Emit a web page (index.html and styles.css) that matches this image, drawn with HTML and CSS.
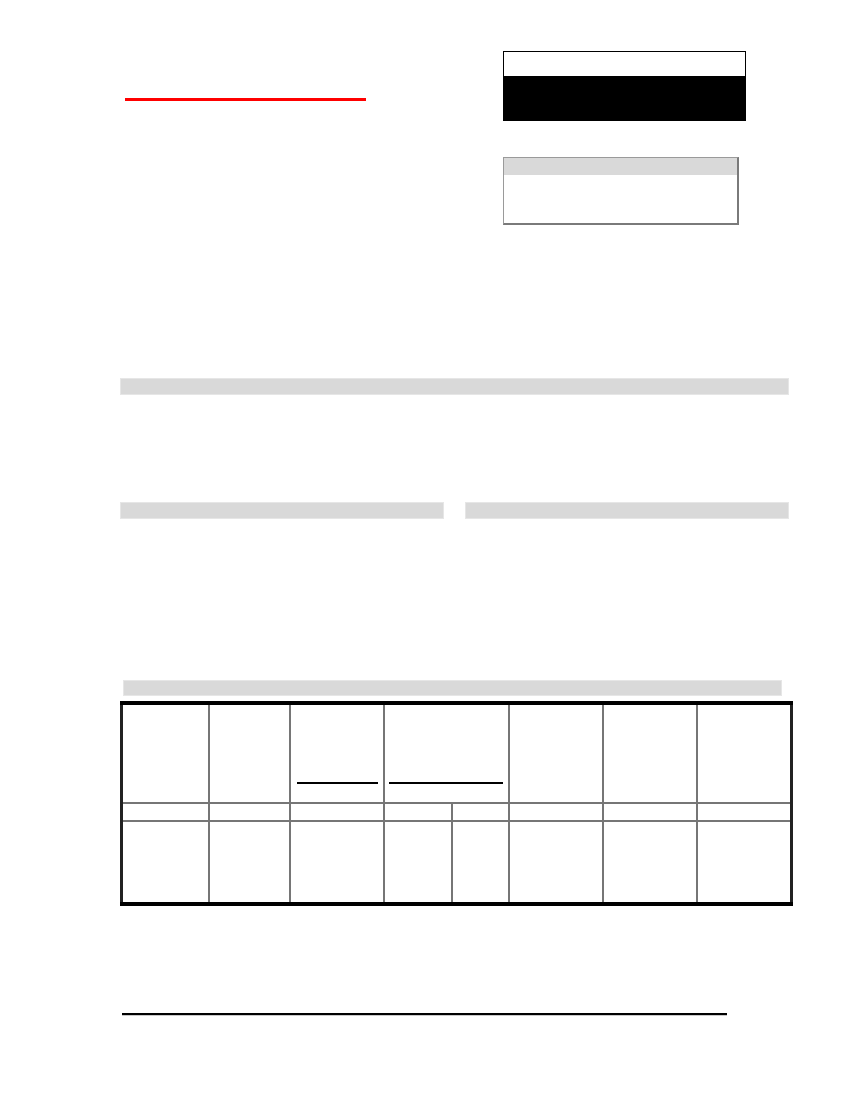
FILE: index.html
```html
<!DOCTYPE html>
<html>
<head>
<meta charset="utf-8">
<link rel="stylesheet" href="styles.css">
</head>
<body>
<div class="page">
  <div class="top">
    <div class="top-left">
      <div class="red-rule"></div>
    </div>
    <div class="top-right">
      <div class="idbox">
        <div class="idbox-top"></div>
        <div class="idbox-bottom"></div>
      </div>
      <div class="graybox">
        <div class="graybox-head"></div>
        <div class="graybox-body"></div>
      </div>
    </div>
  </div>

  <div class="bar bar-full"></div>

  <div class="bar-pair">
    <div class="bar"></div>
    <div class="bar"></div>
  </div>

  <div class="bar bar-table"></div>

  <table class="grid">
    <colgroup>
      <col class="w87"><col class="w81"><col class="w94"><col class="w68"><col class="w57"><col class="w94"><col class="w94"><col class="w95">
    </colgroup>
    <tr class="r1">
      <td></td>
      <td></td>
      <td class="ul-a"><div class="ul"></div></td>
      <td colspan="2" class="ul-b"><div class="ul"></div></td>
      <td></td>
      <td></td>
      <td></td>
    </tr>
    <tr class="r2">
      <td></td><td></td><td></td><td></td><td></td><td></td><td></td><td></td>
    </tr>
    <tr class="r3">
      <td></td><td></td><td></td><td></td><td></td><td></td><td></td><td></td>
    </tr>
  </table>

  <div class="foot-rule"></div>
</div>
</body>
</html>
```

FILE: styles.css
```css
html, body {
  margin: 0;
  padding: 0;
  background: #ffffff;
  font-family: "Liberation Sans", Arial, sans-serif;
}

.page {
  padding-left: 120px;
  width: 672px;
  padding-bottom: 60px;
}

.top {
  display: flex;
}

.top-left {
  width: 383px;
  flex: none;
}

.red-rule {
  margin-top: 98px;
  margin-left: 5px;
  width: 241px;
  height: 3px;
  background: #ff0000;
}

.top-right {
  padding-top: 51px;
}

.idbox {
  width: 243px;
  border: 1px solid #000;
  border-bottom: none;
  box-sizing: border-box;
}

.idbox-top {
  height: 24px;
  background: #fff;
}

.idbox-bottom {
  height: 45px;
  background: #000;
}

.graybox {
  margin-top: 36px;
  width: 236px;
  height: 68px;
  box-sizing: border-box;
  border: 1px solid #9a9a9a;
  border-right: 2px solid #7a7a7a;
  border-bottom: 2px solid #7a7a7a;
}

.graybox-head {
  height: 17px;
  background: #d9d9d9;
}

.graybox-body {
  height: 48px;
}

.bar {
  height: 17px;
  background: #d9d9d9;
  box-sizing: border-box;
  border: 1px solid #e6e6e6;
}

.bar-full {
  margin-top: 153px;
  width: 669px;
}

.bar-pair {
  margin-top: 107px;
  width: 669px;
  display: grid;
  grid-template-columns: 324px 324px;
  column-gap: 21px;
}

.bar-table {
  margin-top: 161px;
  margin-left: 3px;
  width: 659px;
  height: 16px;
}

.grid {
  margin-top: 5px;
  width: 672px;
  border-collapse: collapse;
  table-layout: fixed;
  border-top: 4px solid #000;
  border-bottom: 4px solid #000;
  border-left: 3px solid #222;
  border-right: 3px solid #222;
}

.w87 { width: 87px; }
.w81 { width: 81px; }
.w94 { width: 94px; }
.w68 { width: 68px; }
.w57 { width: 57px; }
.w95 { width: 95px; }

.grid td {
  border: 2px solid #767676;
  padding: 0;
  vertical-align: bottom;
}

.r1 td { height: 97px; }
.r2 td { height: 16px; }
.r3 td { height: 80px; }

.ul {
  height: 0;
  border-top: 2px solid #000;
  margin-bottom: 18px;
}

.ul-a .ul {
  margin-left: 6px;
  margin-right: 5px;
}

.ul-b .ul {
  margin-left: 4px;
  margin-right: 5px;
}

.foot-rule {
  margin-top: 107px;
  margin-left: 2px;
  width: 605px;
  height: 2px;
  background: #000;
  border-bottom: 1px solid #c8c8c8;
}
```
